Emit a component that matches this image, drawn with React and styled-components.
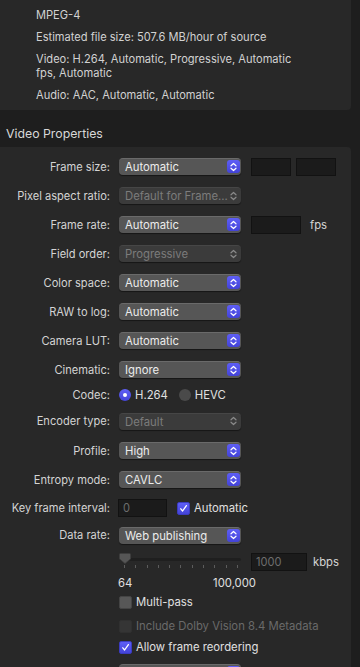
import React from 'react'
import styled, { createGlobalStyle } from 'styled-components'

const Global = createGlobalStyle`
  html, body { margin: 0; padding: 0; background: #1e1e1e; }
  body {
    font-family: Inter, "Noto Sans", "Liberation Sans", sans-serif;
    -webkit-font-smoothing: antialiased;
    color: #d6d6d6;
  }
`

const Page = styled.div`
  width: 360px;
  height: 667px;
  overflow: hidden;
  background: #1e1e1e;
`

const Summary = styled.div`
  width: 351px;
  box-sizing: border-box;
  background: #282828;
  border-bottom-right-radius: 4px;
  padding: 8px 0 8px 36px;
  display: flex;
  flex-direction: column;
  gap: 8px;
`

const Line = styled.div`
  font-size: 11.1px;
  line-height: 14px;
  color: #d2d2d2;
  width: 270px;
`

const SectionTitle = styled.div`
  height: 37px;
  box-sizing: border-box;
  padding: 16px 0 0 6px;
  font-size: 12.3px;
  line-height: 16px;
  color: #d8d8d8;
`

const Panel = styled.div`
  width: 351px;
  min-height: 600px;
  background: #282828;
  border-top-right-radius: 4px;
  padding-top: 5px;
`

const Row = styled.div`
  display: grid;
  grid-template-columns: 110px 1fr;
  column-gap: 9px;
  align-items: center;
  height: ${p => p.$h || 29}px;
`

const Label = styled.div`
  text-align: right;
  font-size: 11.1px;
  color: #d4d4d4;
  white-space: nowrap;
`

const Controls = styled.div`
  display: flex;
  align-items: center;
  gap: ${p => p.$gap ?? 10}px;
`

const Popup = styled.div`
  position: relative;
  width: 122px;
  height: 17px;
  box-sizing: border-box;
  border-radius: 4px;
  background: ${p => (p.$disabled ? '#3b3b3b' : '#565656')};
  border-top: 1px solid ${p => (p.$disabled ? '#464646' : '#6a6a6a')};
  box-shadow: 0 1px 1px rgba(0, 0, 0, 0.45);
  display: flex;
  align-items: center;
  padding-left: 6px;
  font-size: 11.3px;
  color: ${p => (p.$disabled ? '#7c7c7c' : '#ececec')};
`

const Stepper = styled.div`
  position: absolute;
  right: 1px;
  top: 1px;
  width: 13px;
  height: 13px;
  border-radius: 3px;
  background: ${p => (p.$disabled ? 'transparent' : 'linear-gradient(#5e5ef6, #4343d8)')};
  display: flex;
  align-items: center;
  justify-content: center;
`

const Field = styled.div`
  width: ${p => p.$w}px;
  height: 18px;
  box-sizing: border-box;
  background: #1b1b1b;
  border: 1px solid #121212;
  font-size: 11.1px;
  line-height: 16px;
  padding-left: 4px;
  color: #6e6e6e;
`

const Unit = styled.span`
  font-size: 11.3px;
  color: #d4d4d4;
`

const Radio = styled.label`
  display: flex;
  align-items: center;
  gap: 4px;
  font-size: 11.3px;
  color: #e0e0e0;
`

const Dot = styled.span`
  width: 12px;
  height: 12px;
  box-sizing: border-box;
  border-radius: 50%;
  background: ${p => (p.$on ? 'linear-gradient(#6060f6, #4444d8)' : '#4a4a4a')};
  display: flex;
  align-items: center;
  justify-content: center;
  &::after {
    content: '';
    width: 4px;
    height: 4px;
    border-radius: 50%;
    background: ${p => (p.$on ? '#fff' : 'transparent')};
  }
`

const Check = styled.label`
  display: flex;
  align-items: center;
  gap: 4px;
  font-size: 11.3px;
  color: ${p => (p.$disabled ? '#6a6a6a' : '#e0e0e0')};
`

const Box = styled.span`
  width: 11px;
  height: 11px;
  border-radius: 2px;
  background: ${p =>
    p.$on ? 'linear-gradient(#5e5ef6, #4444d8)' : p.$disabled ? '#353535' : '#575757'};
  border: 1px solid ${p => (p.$on ? '#3b3bc0' : p.$disabled ? '#303030' : '#444')};
  display: flex;
  align-items: center;
  justify-content: center;
`

const SliderWrap = styled.div`
  position: relative;
  width: 122px;
  height: 20px;
`

const Track = styled.div`
  position: absolute;
  left: 1px;
  right: 0;
  top: 6px;
  height: 3px;
  border-radius: 2px;
  background: #1f1f1f;
`

const Ticks = styled.div`
  position: absolute;
  left: 5px;
  right: 3px;
  top: 13px;
  display: flex;
  justify-content: space-between;
  span {
    width: 1px;
    height: 3px;
    background: #5c5c5c;
  }
`

const Knob = styled.svg`
  position: absolute;
  left: 0;
  top: 1px;
`

const Scale = styled.div`
  width: 138px;
  display: flex;
  justify-content: space-between;
  font-size: 11.3px;
  color: #e0e0e0;
  margin-left: -1px;
`

const Chevrons = ({ color }) => (
  <svg width="7" height="10" viewBox="0 0 7 10">
    <path d="M1 3.8 L3.5 1.5 L6 3.8 M1 6.2 L3.5 8.5 L6 6.2" fill="none" stroke={color} strokeWidth="1.2" strokeLinecap="round" strokeLinejoin="round" />
  </svg>
)

const Tick = () => (
  <svg width="9" height="9" viewBox="0 0 9 9">
    <path d="M1.8 4.8 L3.6 7 L7.4 1.6" fill="none" stroke="#fff" strokeWidth="1.3" strokeLinecap="round" strokeLinejoin="round" />
  </svg>
)

const Select = ({ value, disabled }) => (
  <Popup $disabled={disabled}>
    {value}
    <Stepper $disabled={disabled}>
      <Chevrons color={disabled ? '#8a8a8a' : '#ffffff'} />
    </Stepper>
  </Popup>
)

const Prop = ({ label, h, gap, children }) => (
  <Row $h={h}>
    <Label>{label}</Label>
    <Controls $gap={gap}>{children}</Controls>
  </Row>
)

export default function App() {
  return (
    <Page>
      <Global />
      <Summary>
        <Line>MPEG-4</Line>
        <Line>Estimated file size: 507.6 MB/hour of source</Line>
        <Line>Video: H.264, Automatic, Progressive, Automatic fps, Automatic</Line>
        <Line>Audio: AAC, Automatic, Automatic</Line>
      </Summary>

      <SectionTitle>Video Properties</SectionTitle>

      <Panel>
        <Prop label="Frame size:">
          <Select value="Automatic" />
          <Controls $gap={5}>
            <Field $w={40} />
            <Field $w={40} />
          </Controls>
        </Prop>
        <Prop label="Pixel aspect ratio:">
          <Select value="Default for Frame..." disabled />
        </Prop>
        <Prop label="Frame rate:" gap={9}>
          <Controls>
            <Select value="Automatic" />
            <Field $w={50} />
          </Controls>
          <Unit>fps</Unit>
        </Prop>
        <Prop label="Field order:">
          <Select value="Progressive" disabled />
        </Prop>
        <Prop label="Color space:">
          <Select value="Automatic" />
        </Prop>
        <Prop label="RAW to log:">
          <Select value="Automatic" />
        </Prop>
        <Prop label="Camera LUT:">
          <Select value="Automatic" />
        </Prop>
        <Prop label="Cinematic:">
          <Select value="Ignore" />
        </Prop>
        <Prop label="Codec:" h={22} gap={11}>
          <Radio><Dot $on />H.264</Radio>
          <Radio><Dot />HEVC</Radio>
        </Prop>
        <Prop label="Encoder type:" h={30}>
          <Select value="Default" disabled />
        </Prop>
        <Prop label="Profile:">
          <Select value="High" />
        </Prop>
        <Prop label="Entropy mode:">
          <Select value="CAVLC" />
        </Prop>
        <Prop label="Key frame interval:" h={28}>
          <Field $w={49} style={{ marginLeft: -1 }}>0</Field>
          <Check><Box $on><Tick /></Box>Automatic</Check>
        </Prop>
        <Prop label="Data rate:" h={26}>
          <Select value="Web publishing" />
        </Prop>
        <Prop label="" h={28} gap={6}>
          <Controls>
            <SliderWrap>
              <Track />
              <Ticks>
                {Array.from({ length: 11 }).map((_, i) => <span key={i} />)}
              </Ticks>
              <Knob width="12" height="11" viewBox="0 0 12 11">
                <path d="M1.5 0.5 H10.5 Q11.5 0.5 11.5 1.5 V6 L6 10.5 L0.5 6 V1.5 Q0.5 0.5 1.5 0.5 Z" fill="#565656" stroke="#3e3e3e" strokeWidth="0.8" />
              </Knob>
            </SliderWrap>
            <Field $w={56}>1000</Field>
          </Controls>
          <Unit>kbps</Unit>
        </Prop>
        <Prop label="" h={12}>
          <Scale>
            <span>64</span>
            <span>100,000</span>
          </Scale>
        </Prop>
        <Prop label="" h={28}>
          <Check><Box />Multi-pass</Check>
        </Prop>
        <Prop label="" h={20}>
          <Check $disabled><Box $disabled />Include Dolby Vision 8.4 Metadata</Check>
        </Prop>
        <Prop label="" h={22}>
          <Check><Box $on><Tick /></Box>Allow frame reordering</Check>
        </Prop>
        <Prop label="Color processing:">
          <Select value="Automatic" />
        </Prop>
      </Panel>
    </Page>
  )
}
